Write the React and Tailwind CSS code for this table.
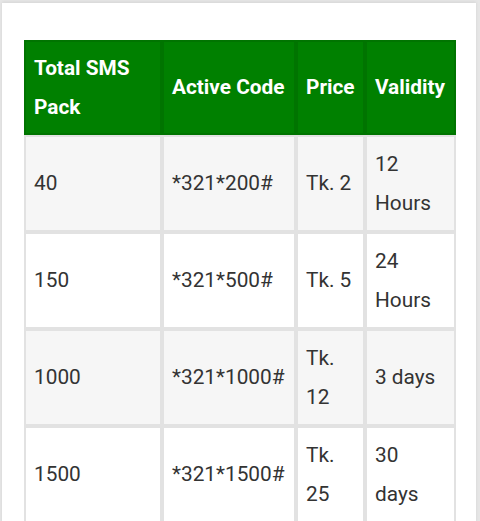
const rows = [
  { pack: '40', code: '*321*200#', price: 'Tk. 2', validity: '12 Hours' },
  { pack: '150', code: '*321*500#', price: 'Tk. 5', validity: '24 Hours' },
  { pack: '1000', code: '*321*1000#', price: 'Tk. 12', validity: '3 days' },
  { pack: '1500', code: '*321*1500#', price: 'Tk. 25', validity: '30 days' },
];

export default function App() {
  return (
    <div className="min-h-screen bg-[#e6e6e6] pl-[2px] pr-[4px] pt-[3px] font-['Roboto',sans-serif]">
      <div className="min-h-[518px] bg-white pl-[22px] pt-[37px] shadow-[0_-1px_3px_rgba(0,0,0,0.08)]">
        <table className="w-[432px] table-fixed border-separate border-spacing-0 text-[20.8px] leading-[38.5px]">
          <colgroup>
            <col className="w-[138px]" />
            <col className="w-[134px]" />
            <col className="w-[69px]" />
            <col className="w-[91px]" />
          </colgroup>
          <thead>
            <tr className="bg-[#008000] text-left font-bold text-white">
              <th className="border-2 border-[#007400] px-2 py-[7px] align-middle">Total SMS Pack</th>
              <th className="whitespace-nowrap border-2 border-[#007400] px-2 py-[7px] align-middle">Active Code</th>
              <th className="border-2 border-[#007400] px-2 py-[7px] align-middle">Price</th>
              <th className="border-2 border-[#007400] px-2 py-[7px] align-middle">Validity</th>
            </tr>
          </thead>
          <tbody className="text-[#333333]">
            {rows.map((r, i) => (
              <tr key={r.pack} className={i % 2 === 0 ? 'bg-[#f6f6f6]' : 'bg-white'}>
                <td className="border-2 border-[#e2e2e2] px-2 py-2 align-middle">{r.pack}</td>
                <td className="whitespace-nowrap border-2 border-[#e2e2e2] px-2 py-2 align-middle">{r.code}</td>
                <td className="border-2 border-[#e2e2e2] px-2 py-2 align-middle">{r.price}</td>
                <td className="border-2 border-[#e2e2e2] px-2 py-2 align-middle">{r.validity}</td>
              </tr>
            ))}
          </tbody>
        </table>
      </div>
    </div>
  );
}
